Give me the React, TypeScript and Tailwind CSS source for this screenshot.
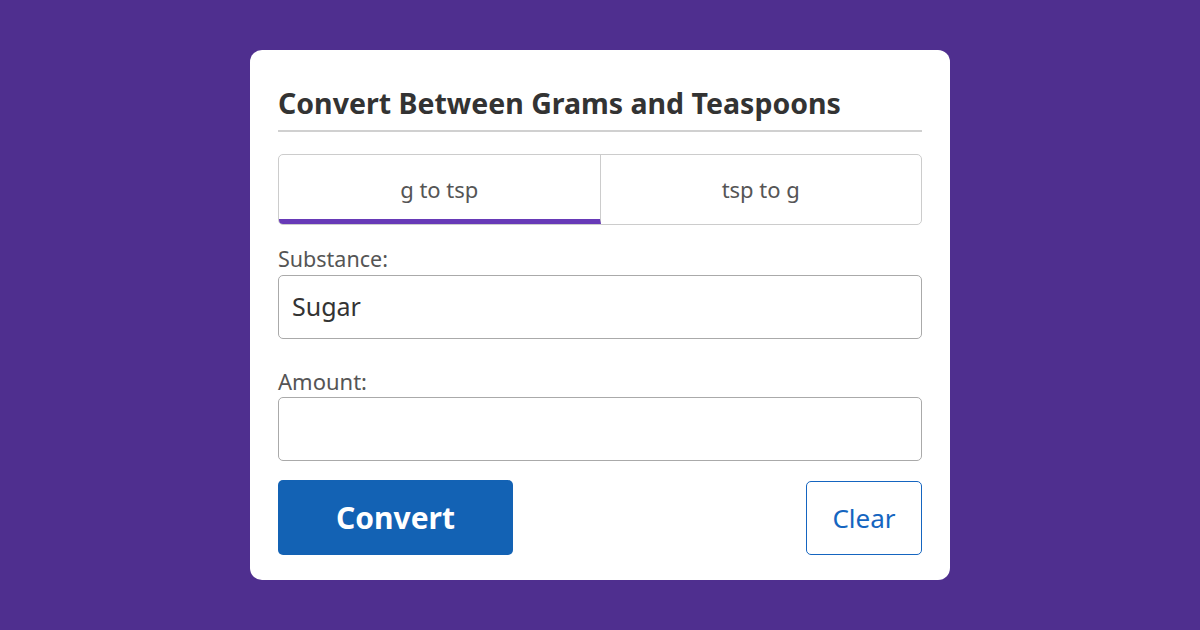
import { useState } from "react";

export default function App() {
  const [mode, setMode] = useState<"g" | "tsp">("g");

  return (
    <div
      className="w-[1200px] h-[630px] bg-[#4f2f8f] flex items-start justify-center pt-[50px]"
      style={{ fontFamily: '"Noto Sans", "Open Sans", sans-serif' }}
    >
      <div className="w-[700px] h-[530px] bg-white rounded-[12px] px-[28px] pt-[35px] flex flex-col">
        <h1 className="text-[28.5px] leading-[36px] font-bold text-[#333]">
          Convert Between Grams and Teaspoons
        </h1>
        <div className="h-[2px] bg-[#d0d0d0] mt-[9px]" />

        <div className="mt-[22px] flex h-[71px] border border-[#ccc] rounded-[5px] overflow-hidden">
          <button
            onClick={() => setMode("g")}
            className={`flex-1 text-[22px] text-[#555] border-r border-[#ccc] ${
              mode === "g" ? "border-b-[5px] border-b-[#673ab7] pt-[5px]" : ""
            }`}
          >
            g to tsp
          </button>
          <button
            onClick={() => setMode("tsp")}
            className={`flex-1 text-[22px] text-[#555] ${
              mode === "tsp" ? "border-b-[5px] border-b-[#673ab7] pt-[5px]" : ""
            }`}
          >
            tsp to g
          </button>
        </div>

        <label className="mt-[21px] text-[21.5px] leading-[26px] text-[#555]">Substance:</label>
        <div className="mt-[3px] h-[64px] border border-[#aaa] rounded-[5px] flex items-center px-[13px]">
          <span className="text-[25px] text-[#333]">Sugar</span>
        </div>

        <label className="mt-[29px] text-[22px] leading-[26px] text-[#555]">Amount:</label>
        <div className="mt-[3px] h-[64px] border border-[#aaa] rounded-[5px]" />

        <div className="mt-[19px] flex justify-between items-start">
          <button className="w-[235px] h-[75px] bg-[#1362b4] rounded-[5px] text-white text-[30px] font-bold">
            Convert
          </button>
          <button className="mt-[1px] w-[116px] h-[74px] border-[1.5px] border-[#1565c0] rounded-[5px] text-[#1565c0] text-[26px]">
            Clear
          </button>
        </div>
      </div>
    </div>
  );
}
